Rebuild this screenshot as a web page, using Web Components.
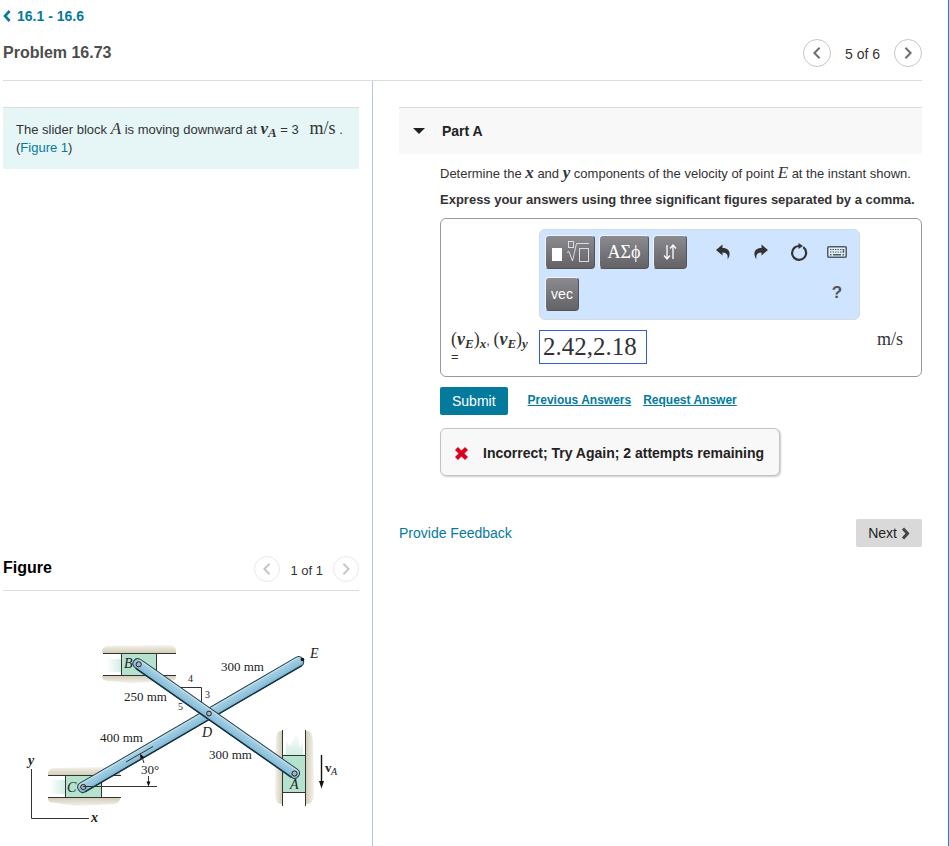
<!DOCTYPE html>
<html lang="en">
<head>
<meta charset="utf-8">
<meta name="viewport" content="width=device-width, initial-scale=1">
<title>Problem 16.73</title>
<style>
    body {
        margin: 0;
        font-family: "Liberation Sans", Arial, sans-serif;
        font-size: 13px;
        line-height: 18px;
        color: #333;
        background: #fff;
    }
</style>
</head>
<body>
<problem-page>
    <page-header slot="header" section="16.1 - 16.6" heading="Problem 16.73"></page-header>

    <info-panel slot="side">
        The slider block <math-text size="17"><i>A</i></math-text> is moving downward at
        <math-text size="17"><b><i>v</i></b><sub><i>A</i></sub></math-text> = 3&nbsp;&nbsp; <math-text size="18">m/s</math-text> .<br>
        (<text-link>Figure 1</text-link>)
    </info-panel>
    <figure-viewer slot="side"><mechanism-diagram></mechanism-diagram></figure-viewer>

    <part-panel slot="main" heading="Part A">
        <span slot="question">Determine the <math-text size="17"><b><i>x</i></b></math-text> and <math-text size="17"><b><i>y</i></b></math-text> components of the velocity of point <math-text size="17"><i>E</i></math-text> at the instant shown.</span>
        <span slot="instruction">Express your answers using three significant figures separated by a comma.</span>
        <answer-box value="2.42,2.18" unit="m/s"></answer-box>
        <submit-row></submit-row>
        <result-box>Incorrect; Try Again; 2 attempts remaining</result-box>
    </part-panel>
    <page-footer slot="main"></page-footer>
</problem-page>

<script>
function define(name, markup) {
    customElements.define(name, class extends HTMLElement {
        connectedCallback() {
            if (this.shadowRoot) {
                return;
            }

            const shadow = this.attachShadow({ mode: "open" });
            shadow.innerHTML = markup(this);
        }
    });
}

define("problem-page", () => `
    <style>
        :host {
            display: flex;
            flex-direction: column;
            box-sizing: border-box;
            min-height: 100vh;
            border-right: 1px solid #1a86d9;
        }

        .columns {
            display: grid;
            grid-template-columns: minmax(0, 373fr) minmax(0, 575fr);
            flex: 1;
        }

        aside {
            display: flex;
            flex-direction: column;
            justify-content: space-between;
            padding: 26px 13px 0 3px;
            border-right: 1px solid #b5cadd;
        }

        main {
            padding: 26px 26px 0;
        }
    </style>

    <slot name="header"></slot>
    <div class="columns">
        <aside><slot name="side"></slot></aside>
        <main><slot name="main"></slot></main>
    </div>`);

// no whitespace around the slot in the inline elements, it would be drawn
define("text-link", () => `<style>
        a {
            color: #047a9c;
            text-decoration: none;
        }
    </style><a href="#"><slot></slot></a>`);

define("math-text", (host) => `<style>
        :host {
            font-family: "Liberation Serif", "Times New Roman", serif;
            font-size: ${host.getAttribute("size")}px;
            line-height: 1;
        }

        ::slotted(sub) {
            font-size: 13px;
            font-weight: bold;
            line-height: 0;
            vertical-align: -3px;
        }
    </style><slot></slot>`);

define("circle-pager", (host) => `
    <style>
        :host {
            display: flex;
            align-items: center;
            gap: 14px;
            font-size: 14px;
            --ring: #c7c7c7;
            --arrow: #6a7070;
            --size: 28px;
        }

        :host([muted]) {
            gap: 10px;
            font-size: 13px;
            --ring: #e9e9e9;
            --arrow: #c7c7c7;
            --size: 26px;
        }

        button {
            display: grid;
            place-items: center;
            width: var(--size);
            height: var(--size);
            padding: 0;
            border: 1px solid var(--ring);
            border-radius: 50%;
            background: #fff;
        }

        path {
            fill: none;
            stroke: var(--arrow);
            stroke-width: 2;
        }

        span {
            padding-top: 3px;
        }
    </style>

    <button type="button" aria-label="Previous">
        <svg width="8" height="12" viewBox="0 0 8 12"><path d="M6.6 .8 L1.4 6 L6.6 11.2"/></svg>
    </button>
    <span>${host.getAttribute("text")}</span>
    <button type="button" aria-label="Next">
        <svg width="8" height="12" viewBox="0 0 8 12"><path d="M1.4 .8 L6.6 6 L1.4 11.2"/></svg>
    </button>`);

define("page-header", (host) => `
    <style>
        header {
            margin: 0 26px 0 3px;
            padding-top: 7px;
            border-bottom: 1px solid #dcdcdc;
        }

        a {
            display: inline-flex;
            align-items: center;
            gap: 6px;
            font-size: 14px;
            font-weight: bold;
            color: #047a9c;
            text-decoration: none;
        }

        .title-row {
            display: flex;
            justify-content: space-between;
            align-items: center;
            margin: 12px 0 14px;
            height: 27px;
        }

        h1 {
            margin: 0;
            font-size: 16px;
            color: #4d4d4d;
        }
    </style>

    <header>
        <a href="#">
            <svg width="8" height="12" viewBox="0 0 8 12"><path d="M6.6 1 L2 6 L6.6 11" fill="none" stroke="#047a9c" stroke-width="2.6"/></svg>
            ${host.getAttribute("section")}
        </a>
        <div class="title-row">
            <h1>${host.getAttribute("heading")}</h1>
            <circle-pager text="5 of 6"></circle-pager>
        </div>
    </header>`);

define("info-panel", () => `
    <style>
        :host {
            display: block;
            padding: 11px 13px 12px;
            border-top: 1px solid #dcdcdc;
            background: #e6f6f7;
        }
    </style>
    <slot></slot>`);

define("figure-viewer", () => `
    <style>
        .bar {
            display: flex;
            justify-content: space-between;
            align-items: center;
            padding-bottom: 8px;
            border-bottom: 1px solid #dcdcdc;
        }

        h2 {
            margin: 0;
            padding-bottom: 2px;
            font-size: 16px;
            color: #000;
        }
    </style>

    <div class="bar">
        <h2>Figure</h2>
        <circle-pager muted text="1 of 1"></circle-pager>
    </div>
    <slot></slot>`);

define("mechanism-diagram", () => `
    <style>
        svg {
            display: block;
            width: 356px;
            max-width: 100%;
            height: 255px;
        }

        text {
            font-family: "Liberation Serif", "Times New Roman", serif;
            font-size: 13px;
            fill: #222;
        }

        .point {
            font-size: 14px;
            font-style: italic;
        }

        .small {
            font-size: 10px;
        }

        .bold {
            font-weight: bold;
        }

        .line {
            fill: none;
            stroke: #333;
            stroke-width: 1;
        }

        .block {
            fill: #b5e2cc;
            stroke: #333;
        }

        .pin {
            fill: #a9b4ba;
            stroke: #222;
        }
    </style>

    <svg viewBox="3 591 356 255" role="img" aria-label="Linkage with slider blocks A, B and C">
        <defs>
            <linearGradient id="up" x1="0" y1="1" x2="0" y2="0">
                <stop offset="0" stop-color="#d3ceb9"/><stop offset="1" stop-color="#f4f2ec"/>
            </linearGradient>
            <linearGradient id="down" x1="0" y1="0" x2="0" y2="1">
                <stop offset="0" stop-color="#d3ceb9"/><stop offset="1" stop-color="#f4f2ec"/>
            </linearGradient>
            <linearGradient id="left" x1="1" y1="0" x2="0" y2="0">
                <stop offset="0" stop-color="#d3ceb9"/><stop offset="1" stop-color="#f4f2ec"/>
            </linearGradient>
            <linearGradient id="right" x1="0" y1="0" x2="1" y2="0">
                <stop offset="0" stop-color="#d3ceb9"/><stop offset="1" stop-color="#f4f2ec"/>
            </linearGradient>
            <linearGradient id="trail" x1="0" y1="0" x2="1" y2="0">
                <stop offset="0" stop-color="#fff"/><stop offset="1" stop-color="#d2eee4"/>
            </linearGradient>
            <linearGradient id="trail-down" x1="0" y1="0" x2="0" y2="1">
                <stop offset="0" stop-color="#fff"/><stop offset="1" stop-color="#d2eee4"/>
            </linearGradient>
            <linearGradient id="bar" x1="0" y1="0" x2="0" y2="1">
                <stop offset="0" stop-color="#d9eff8"/><stop offset=".25" stop-color="#a0cde2"/>
                <stop offset=".7" stop-color="#8fc2db"/><stop offset="1" stop-color="#78b1cd"/>
            </linearGradient>
        </defs>

        <!-- guide of block B -->
        <path fill="url(#up)" d="M102 653 Q101 647 108 646 L168 645 Q177 645 176 653 Z"/>
        <path fill="url(#down)" d="M102 676 Q101 681 110 681 L130 683 L170 681 Q176 681 176 676 Z"/>
        <rect x="107" y="659" width="14" height="13" fill="url(#trail)"/>
        <rect class="block" x="121.500" y="653.500" width="35" height="22"/>
        <path class="line" d="M103 653.500 H176 M103 675.500 H176"/>

        <!-- guide of block C -->
        <path fill="url(#up)" d="M48 775 Q47 769 54 768 L112 767 Q121 767 120 775 Z"/>
        <path fill="url(#down)" d="M48 798 Q47 803 56 803 L76 806 L114 804 Q120 803 120 798 Z"/>
        <rect x="50" y="780" width="15" height="14" fill="url(#trail)"/>
        <rect class="block" x="65.500" y="775.500" width="36" height="22"/>
        <path class="line" d="M48 775.500 H121 M48 797.500 H121"/>

        <!-- guide of block A -->
        <path fill="url(#left)" d="M282 731 Q276 730 276 740 L275 794 Q275 804 282 804 Z"/>
        <path fill="url(#right)" d="M306 731 Q312 730 313 740 L314 794 Q314 804 306 804 Z"/>
        <path fill="url(#trail-down)" d="M286 755 V741 L290 746 L297 732 L300 748 L303 742 V755 Z"/>
        <rect class="block" x="282.500" y="755.500" width="23" height="37"/>
        <path class="line" d="M282.500 730 V806 M305.500 730 V806"/>

        <!-- 3-4-5 slope and angle -->
        <path class="line" d="M179 687.500 H201.500 V705"/>
        <path class="line" d="M83 786.500 H157"/>

        <!-- bar CE -->
        <g transform="translate(83.300 787) rotate(-30.200)">
            <path fill="url(#bar)" stroke="#263f4b" d="M-1 -5 H249 Q254 -5 254 0 Q254 5 249 5 H-1 Q-5.500 5 -5.500 0 Q-5.500 -5 -1 -5 Z"/>
            <path d="M-1 5 H250" stroke="#16323f" stroke-width="1.400"/>
        </g>
        <circle cx="302.500" cy="659.500" r="1.800" fill="#111"/>

        <!-- bar BA -->
        <g transform="translate(138.700 664.300) rotate(35)">
            <path fill="url(#bar)" stroke="#263f4b" d="M0 -5 H190 Q195 -5 195 0 Q195 5 190 5 H0 Q-6 5 -6 0 Q-6 -5 0 -5 Z"/>
            <path d="M0 5 H190" stroke="#16323f" stroke-width="1.400"/>
        </g>

        <circle class="pin" cx="138.700" cy="664.300" r="2.600"/>
        <circle class="pin" cx="83.300" cy="787" r="2.600"/>
        <circle class="pin" cx="209" cy="713.500" r="2.400"/>
        <circle class="pin" cx="294.500" cy="773.500" r="2.600"/>

        <path class="line" d="M83 786.500 H102"/>
        <path class="line" d="M126 762 L153 746.500"/>
        <path class="line" d="M141 756 Q143 759 144 763 M148.500 776 V783"/>
        <path fill="#111" d="M140 753.500 L144.500 757.500 L140.500 759 Z M146.500 781.500 H150.500 L148.500 786.500 Z"/>

        <!-- axes and velocity arrow -->
        <path class="line" d="M31.500 769 V818.500 H89"/>
        <path d="M321.500 755 V782" stroke="#111" stroke-width="1.400"/>
        <path fill="#111" d="M319 781 H324 L321.500 788.500 Z"/>

        <text x="221" y="671">300 mm</text>
        <text x="124" y="701">250 mm</text>
        <text x="100" y="742">400 mm</text>
        <text x="209" y="759">300 mm</text>
        <text x="141" y="774">30°</text>
        <text class="small" x="188" y="682">4</text>
        <text class="small" x="205" y="698">3</text>
        <text class="small" x="178" y="710">5</text>
        <text class="point" x="124" y="668">B</text>
        <text class="point" x="67" y="792">C</text>
        <text class="point" x="202" y="737">D</text>
        <text class="point" x="290" y="789">A</text>
        <text class="point" x="310" y="658">E</text>
        <text class="point bold" x="28" y="765">y</text>
        <text class="point bold" x="91" y="822">x</text>
        <text class="bold" x="325" y="772">v</text>
        <text class="small" x="331" y="775" font-style="italic">A</text>
    </svg>`);

define("part-panel", (host) => `
    <style>
        :host {
            display: block;
        }

        .head {
            display: flex;
            align-items: center;
            gap: 17px;
            height: 46px;
            padding: 0 14px;
            border-top: 1px solid #dcdcdc;
            background: #f8f8f8;
        }

        h2 {
            margin: 0;
            font-size: 14px;
            color: #222;
        }

        .body {
            padding: 10px 0 0 41px;
        }

        p {
            margin: 0 0 6px;
            line-height: 20px;
        }

        .instruction {
            margin-bottom: 8px;
            font-weight: bold;
        }
    </style>

    <section>
        <div class="head">
            <svg width="12" height="6" viewBox="0 0 12 6"><path d="M0 0 H12 L6 6 Z" fill="#222"/></svg>
            <h2>${host.getAttribute("heading")}</h2>
        </div>
        <div class="body">
            <p><slot name="question"></slot></p>
            <p class="instruction"><slot name="instruction"></slot></p>
            <slot></slot>
        </div>
    </section>`);

define("math-toolbar", () => `
    <style>
        :host {
            display: flex;
            justify-content: space-between;
            box-sizing: border-box;
            padding: 5px;
            border: 1px solid #d5dbe3;
            border-radius: 6px;
            background: #cfe4ff;
        }

        .keys {
            display: flex;
            flex-wrap: wrap;
            align-content: start;
            gap: 8px 4px;
            width: 150px;
        }

        .keys button {
            display: grid;
            place-items: center;
            box-sizing: border-box;
            width: 34px;
            height: 34px;
            padding: 0;
            border: 1px solid;
            border-color: #f2f2f2 #555 #555 #f2f2f2;
            border-radius: 4px;
            background: linear-gradient(#8b8b90, #636366);
            color: #fff;
            font: 14px "Liberation Sans", Arial, sans-serif;
        }

        .keys .wide {
            width: 50px;
        }

        .keys .greek {
            font: 18px "Liberation Serif", "Times New Roman", serif;
        }

        .tools {
            display: grid;
            grid-template-columns: repeat(4, 38px);
            grid-auto-rows: 34px;
            row-gap: 7px;
            margin-right: -2px;
        }

        .tools button {
            display: grid;
            place-items: center;
            padding: 0;
            border: 0;
            background: none;
            color: #555;
            font: bold 17px "Liberation Sans", Arial, sans-serif;
        }

        .help {
            grid-column: 4;
        }
    </style>

    <div class="keys">
        <button type="button" class="wide" aria-label="Templates">
            <svg width="40" height="24" viewBox="0 0 40 24">
                <rect x="2" y="8" width="10" height="13" fill="#fff"/>
                <g fill="none" stroke="#ddd">
                    <rect x="18.500" y="1.500" width="5" height="6"/>
                    <path d="M17 12.500 L19 11.500 L22.500 21 L26.500 3.500 H39"/>
                    <rect x="29.500" y="8.500" width="9" height="13"/>
                </g>
            </svg>
        </button>
        <button type="button" class="wide greek">ΑΣϕ</button>
        <button type="button" aria-label="Arrows">
            <svg width="14" height="18" viewBox="0 0 14 18"><path fill="none" stroke="#fff" stroke-width="1.300" d="M4 2 V16 M1 12.500 L4 16 L7 12.500 M10 16 V2 M7 5.500 L10 2 L13 5.500"/></svg>
        </button>
        <button type="button">vec</button>
    </div>
    <div class="tools">
        <button type="button" aria-label="Undo">
            <svg width="16" height="16" viewBox="0 0 16 16"><path fill="#333" d="M1 6 L7.500 .5 V4 C13 4 15 7 14.500 11 Q14.200 13.500 12.500 15.500 C13.300 11 12 8.500 7.500 8.500 V11.500 Z"/></svg>
        </button>
        <button type="button" aria-label="Redo">
            <svg width="16" height="16" viewBox="0 0 16 16"><path fill="#333" d="M15 6 L8.500 .5 V4 C3 4 1 7 1.500 11 Q1.800 13.500 3.500 15.500 C2.700 11 4 8.500 8.500 8.500 V11.500 Z"/></svg>
        </button>
        <button type="button" aria-label="Reset">
            <svg width="18" height="18" viewBox="0 0 18 18"><path fill="none" stroke="#333" stroke-width="2.200" d="M13.200 4.200 A7 7 0 1 1 4.500 4.600 Q6.500 3 9.500 3"/><path fill="#333" d="M8.500 0 L13 3 L8.500 6 Z"/></svg>
        </button>
        <button type="button" aria-label="Keyboard">
            <svg width="20" height="12" viewBox="0 0 20 12">
                <rect x=".75" y=".75" width="18.500" height="10.500" rx="1" fill="#e2edf5" stroke="#4c5c68" stroke-width="1.500"/>
                <path fill="none" stroke="#4c5c68" stroke-dasharray="1.500 1" d="M3 3.500 H17 M3 6 H17"/>
                <path stroke="#4c5c68" stroke-width="1.400" d="M3 8.700 H4.500 M6 8.700 H14 M15.500 8.700 H17 M16.500 3 V6.500"/>
            </svg>
        </button>
        <button type="button" class="help" aria-label="Help">?</button>
    </div>`);

define("answer-box", (host) => `
    <style>
        :host {
            display: grid;
            grid-template-columns: 88px minmax(0, 1fr) 43px;
            row-gap: 10px;
            padding: 10px 18px 11px 10px;
            border: 1px solid #999;
            border-radius: 6px;
        }

        math-toolbar {
            grid-column: 2;
            height: 91px;
        }

        label {
            grid-column: 1;
            align-self: start;
            line-height: 16px;
            white-space: nowrap;
        }

        input {
            display: block;
            box-sizing: border-box;
            width: 108px;
            height: 34px;
            padding: 0 3px;
            border: 1px solid #2f62c9;
            color: #333;
            font: 25px "Liberation Serif", "Times New Roman", serif;
        }

        .unit {
            text-align: right;
        }
    </style>

    <math-toolbar></math-toolbar>
    <label for="answer"><math-text size="18">(<b><i>v</i></b><sub><i>E</i></sub>)<sub><i>x</i></sub></math-text>, <math-text size="18">(<b><i>v</i></b><sub><i>E</i></sub>)<sub><i>y</i></sub></math-text><br>=</label>
    <input id="answer" type="text" value="${host.getAttribute("value")}">
    <math-text class="unit" size="18">${host.getAttribute("unit")}</math-text>`);

define("submit-row", () => `
    <style>
        :host {
            display: flex;
            align-items: center;
            gap: 12px;
            margin: 10px 0 13px;
        }

        button {
            height: 28px;
            margin-right: 8px;
            padding: 0 12px;
            border: 0;
            border-radius: 2px;
            background: #047a9c;
            color: #fff;
            font: 14px "Liberation Sans", Arial, sans-serif;
        }

        a {
            padding-bottom: 2px;
            font-size: 12px;
            font-weight: bold;
            color: #047a9c;
        }
    </style>

    <button type="submit">Submit</button>
    <a href="#">Previous Answers</a>
    <a href="#">Request Answer</a>`);

define("result-box", () => `
    <style>
        :host {
            display: flex;
            align-items: center;
            gap: 14px;
            box-sizing: border-box;
            width: fit-content;
            height: 48px;
            padding: 2px 15px 0 13px;
            border: 1px solid #c3c3c3;
            border-radius: 6px;
            background: #f8f8f8;
            box-shadow: 1px 1px 2px #ccc;
            color: #222;
            font-size: 14px;
            font-weight: bold;
        }
    </style>

    <svg width="15" height="15" viewBox="0 0 15 15"><path d="M2.500 2.500 L12.500 12.500 M12.500 2.500 L2.500 12.500" stroke="#db0020" stroke-width="4.200"/></svg>
    <slot></slot>`);

define("page-footer", () => `
    <style>
        :host {
            display: flex;
            justify-content: space-between;
            align-items: center;
            margin-top: 43px;
            font-size: 14px;
        }

        button {
            display: flex;
            align-items: center;
            gap: 4px;
            height: 28px;
            padding: 0 12px;
            border: 0;
            border-radius: 2px;
            background: #d9d9d9;
            color: #222;
            font: 14px "Liberation Sans", Arial, sans-serif;
        }
    </style>

    <text-link>Provide Feedback</text-link>
    <button type="button">
        Next
        <svg width="9" height="13" viewBox="0 0 9 13"><path d="M2 1.500 L6.500 6.500 L2 11.500" fill="none" stroke="#444" stroke-width="3"/></svg>
    </button>`);
</script>
</body>
</html>
